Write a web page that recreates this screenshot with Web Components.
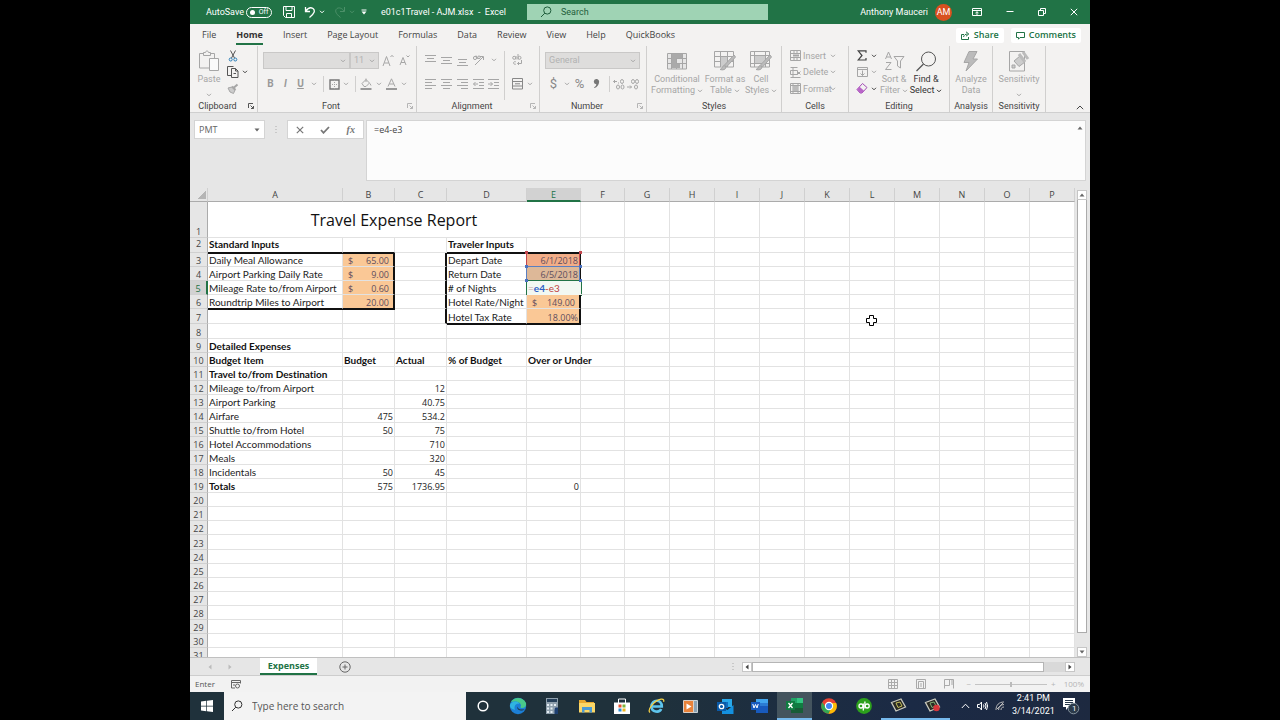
<!DOCTYPE html>
<html lang="en">
<head>
<meta charset="utf-8">
<title>e01c1Travel - AJM.xlsx - Excel</title>
<style>
  html, body { margin: 0; height: 100%; background: #000; }
  body { font: 9px/12px "Open Sans", "Noto Sans", sans-serif; color: #444; }
</style>
</head>
<body>
<excel-app></excel-app>
<script>
const svg = (w, h, body) => `<svg xmlns="http://www.w3.org/2000/svg" width="${w}" height="${h}" viewBox="0 0 ${w} ${h}" fill="none" stroke="currentColor" aria-hidden="true">${body}</svg>`;

const ICONS = {
  save: svg(12, 12, '<path d="M.5.5h11v11h-9l-2-2zM3 .5v4h6v-4M3.500 11.500v-4h5v4"/>'),
  undo: svg(12, 12, '<path stroke-width="1.300" d="M1.500 1v4.500H6M1.800 5.200C4 2 7 1.200 9 2.500c2.500 2 1.500 5-3.500 9"/>'),
  redo: svg(12, 12, '<path d="M10.500 1v4.500H6M10.200 5.200C8 2 5 1.200 3 2.500c-2.500 2-1.500 5 3.500 9"/>'),
  chev: svg(6, 4, '<path d="M1 .8l2 2 2-2"/>'),
  caret: svg(6, 4, '<path fill="currentColor" stroke="none" d="M.500.500h5L3 3.500z"/>'),
  customize: svg(6, 6, '<path d="M.500 1h5"/><path fill="currentColor" stroke="none" d="M.500 2.500h5L3 5.500z"/>'),
  magnify: svg(12, 12, '<circle cx="7.300" cy="4.500" r="3.600"/><path d="M4.800 7.200L1 11"/>'),
  ribbonopts: svg(10, 8, '<path d="M.500.500h9v7h-9zM.500 2.500h9M5 7V4M3.500 5L5 3.700 6.500 5"/>'),
  min: svg(8, 8, '<path d="M.500 3.500h7"/>'),
  restore: svg(8, 8, '<path d="M.500 2.500h5v5h-5zM2.500 2V.500h5v5H6"/>'),
  close: svg(8, 8, '<path d="M.800.800l6.400 6.400M7.200.800L.800 7.200"/>'),
  share: svg(9, 9, '<path d="M3 3.500H.500v5h7V6M2.500 6c.5-2 2-3 4-3M5 .800L7.800 3 5 5.200"/>'),
  comment: svg(9, 9, '<path d="M.500 1.500h8v5H4L2.500 8.200V6.500h-2z"/>'),
  paste: svg(22, 22, '<path d="M11 18H1.500V3.500H6M12 3.500h4.500V8"/><path d="M5.500 5.500v-3h2c0-2 3-2 3 0h2v3z"/><path fill="#fafafa" d="M11.500 8.500h9v12h-9z"/>'),
  cut: svg(10, 12, '<path stroke="#555" d="M2.500.500l4 7.500M7.500.500l-4 7.500"/><circle cx="2.700" cy="9.500" r="1.500" stroke="#2b7fb8"/><circle cx="7.300" cy="9.500" r="1.500" stroke="#2b7fb8"/>'),
  copy: svg(12, 12, '<path stroke="#555" d="M4 9.500H.500v-9h6M4.500 2.500h4l2.500 2.500v6.500H4.500zM8.500 2.500V5H11M6.500 7.500h2.500"/>'),
  painter: svg(12, 11, '<path fill="#ccc" d="M1 5l4-1 3 3-1.500 3.500L3 9z"/><path stroke-width="2" d="M7 4.500l3.500-3M5 3.500l3.500 3.500"/>'),
  grow: svg(12, 13, '<path d="M1 12L4.500 2.500 8 12M2.300 9h4.500M8.500 3L10 1.300 11.500 3"/>'),
  shrink: svg(11, 12, '<path d="M1 11l3-7.500L7 11M2 8.500h4M7.500 1.500L9 3l1.500-1.500"/>'),
  borders: svg(11, 11, '<path stroke="#777" stroke-width="1.400" d="M1 1h9v9H1z"/><path stroke-dasharray="1 1" d="M5.500 1v9M1 5.500h9"/>'),
  fill: svg(12, 12, '<path d="M2 5.500L6 1.500l3.500 3.500L6 8.500H4zM6 .500V4M10 5.500l1 2"/><path stroke="#999" stroke-width="2" d="M.500 11h11"/>'),
  fontcolor: svg(11, 12, '<path d="M2 8.500L5.500.800 9 8.500M3.300 6h4.500"/><path stroke="#999" stroke-width="2" d="M0 11h11"/>'),
  launcher: svg(6, 6, '<path d="M.500 5V.500H5M2.500 2.500l3 3M5.500 3v2.500H3"/>'),
  top: svg(11, 12, '<path d="M0 1.500h11M2 4.500h7M0 7.500h11"/>'),
  middle: svg(11, 12, '<path d="M0 3.500h11M2 6.500h7M0 9.500h11"/>'),
  bottom: svg(11, 12, '<path d="M1 5.500h9M2 8.500h7M0 11.500h11"/>'),
  left: svg(11, 12, '<path d="M0 1.500h11M0 4.500h7M0 7.500h11M0 10.500h7"/>'),
  center: svg(11, 12, '<path d="M0 1.500h11M2 4.500h7M0 7.500h11M2 10.500h7"/>'),
  right: svg(11, 12, '<path d="M0 1.500h11M4 4.500h7M0 7.500h11M4 10.500h7"/>'),
  outdent: svg(11, 12, '<path d="M0 1.500h11M6 4.500h5M6 7.500h5M0 10.500h11M5 6H.500M2.500 4L.500 6l2 2"/>'),
  indent: svg(11, 12, '<path d="M0 1.500h11M6 4.500h5M6 7.500h5M0 10.500h11M0 6h4.500M2.500 4l2 2-2 2"/>'),
  orient: svg(13, 12, '<path d="M3 11l8-8M8 2.500h3.500V6"/><circle cx="3" cy="4" r="1.600"/><path d="M4 1.500l2 3.500"/><circle cx="7" cy="3.300" r="1.300"/>'),
  wrap: svg(10, 12, '<circle cx="2.200" cy="3.800" r="1.500"/><path d="M4 2v3.500M6 0v5.500"/><circle cx="7.500" cy="3.800" r="1.500"/><path d="M3.800 7.800c-3-1-3 3.200 0 2.400M9.500 6v3.500H5.500M7 8L5.500 9.500 7 11"/>'),
  merge: svg(11, 12, '<path stroke="#888" d="M.500.500h10v10.500H.500zM.500 3.500h10M.500 8h10M3 5.800h5"/>'),
  comma: svg(7, 10, '<path fill="#777" stroke="none" d="M3.500 0a2.600 2.600 0 0 1 2.600 3C6 6 4 8.300 1.500 9L1 8.200c1.500-.7 2.200-1.700 2.300-3A2.600 2.600 0 0 1 3.500 0z"/>'),
  decinc: svg(12, 11, '<path d="M4 2.500H.500M2 1L.500 2.500 2 4M5.500 3.500v1"/><ellipse cx="9" cy="2.500" rx="1.500" ry="2"/><ellipse cx="5" cy="8" rx="1.500" ry="2"/><ellipse cx="9.500" cy="8" rx="1.500" ry="2"/>'),
  decdec: svg(12, 11, '<ellipse cx="6" cy="2.500" rx="1.500" ry="2"/><ellipse cx="10" cy="2.500" rx="1.500" ry="2"/><path d="M0 8h4.500M3 6.500L4.500 8 3 9.500"/><ellipse cx="9" cy="8" rx="1.500" ry="2"/>'),
  condfmt: svg(20, 17, '<path fill="#e6e6e6" d="M.500.500h19v15.500H.500zM.500 5.500h19M.500 10.500h19M4.500.500V16M9.500.500V16M15.500.500V16"/><path fill="#aaa" stroke="none" d="M5 1h4v14H5zM9 1h6v4H9zM9 11h4v4H9z"/>'),
  fmttable: svg(22, 20, '<path d="M.500.500h19v15.500H.500zM.500 5.500h19M.500 10.500h19M6.500.500V16M13.500.500V16"/><path fill="#ccc" stroke="none" d="M7 6h6v9H7z"/><path fill="#bbb" d="M20 4L10.500 14l2 2L21.500 6zM10 14.500c-2 .5-1 3-4 4 3 1 6 0 6-2.500z"/>'),
  cellstyle: svg(22, 20, '<path d="M.500.500h19v15.500H.500zM.500 4.500h19M.500 12.500h19M4.500.500V16M15.500.500V16"/><path fill="#ccc" stroke="none" d="M5 5h10v7H5z"/><path fill="#bbb" d="M20 4L10.500 14l2 2L21.500 6zM10 14.500c-2 .5-1 3-4 4 3 1 6 0 6-2.500z"/>'),
  cinsert: svg(11, 11, '<path d="M.500.500h10v10H.500zM.500 3.500h10M.500 7.500h10M4 .500v3M7 .500v3M4 7.500v3M7 7.500v3"/><path stroke-width="2" d="M3 5.500h6"/>'),
  cdelete: svg(11, 11, '<path d="M.500.500h7M.500 3.500h7v4H.500zM.500 10.500h10M3 .500v10M7.500 4.500l3 3M10.500 4.500l-3 3"/>'),
  cformat: svg(11, 11, '<path d="M.500.500h10v10H.500zM.500 8.500h10M.500 2.500h10M3 0v11M8 0v11"/><path fill="#bbb" stroke="none" d="M3 3h5v5H3z"/>'),
  sum: svg(10, 11, '<path stroke="#444" stroke-width="1.200" d="M9 2.800V.800H1.200L5 5.500 1.200 10H9V8"/>'),
  filldown: svg(11, 10, '<path d="M.500.500h10v9H.500zM.500 2.500h10M5.500 3.500v5M3.500 6.500l2 2 2-2"/>'),
  eraser: svg(12, 11, '<path stroke="#a34bb5" d="M1 6.500l5.500-6L11 4.500l-5 5.500H4z"/><path fill="#b865c8" stroke="none" d="M1 6.500l2.500-2.700L8 7.800 6 10H4z"/>'),
  sort: svg(21, 20, '<path d="M1.500 8L4.500 1l3 7M2.500 6h4M2 11.500h5L1.500 18.500H7.500"/><path d="M10 5.500h10L16.500 10v7l-3-2v-5z"/>'),
  find: svg(22, 21, '<circle cx="13.500" cy="8" r="7" stroke="#555"/><path stroke="#555" stroke-width="1.300" d="M8.500 13L1.500 20"/>'),
  bolt: svg(16, 21, '<path fill="#bbb" d="M6 .500h8L10 8h4.500L3 20l3-8.500H1z"/>'),
  sens: svg(21, 21, '<path d="M.500.500h15v19.500H.500z"/><path fill="#ccc" d="M5 10l6-5 5 6-6 4.500zM3 14h3v3H3z"/><path stroke-width="3" stroke="#bbb" d="M10 3l6 8M14 1l5 7"/>'),
  colup: svg(8, 5, '<path stroke="#444" d="M.800 4.200L4 1l3.200 3.200"/>'),
  cancel: svg(8, 8, '<path stroke-width="1.200" d="M.800.800l6.400 6.400M7.200.800L.800 7.200"/>'),
  check: svg(10, 8, '<path stroke-width="1.800" d="M1 4l2.500 2.800L9 1"/>'),
  dots: svg(2, 10, '<path stroke="#aaa" stroke-dasharray="1 2" d="M1 1v9"/>'),
  up: svg(6, 4, '<path fill="#666" stroke="none" d="M3 .500L5.500 3.500h-5z"/>'),
  down: svg(6, 4, '<path fill="#666" stroke="none" d="M3 3.500L5.500.500h-5z"/>'),
  prev: svg(4, 6, '<path fill="currentColor" stroke="none" d="M.500 3L3.500.500v5z"/>'),
  next: svg(4, 6, '<path fill="currentColor" stroke="none" d="M3.500 3L.500.500v5z"/>'),
  plus: svg(12, 12, '<circle cx="6" cy="6" r="5.200"/><path d="M3.500 6h5M6 3.500v5"/>'),
  macro: svg(10, 9, '<path stroke="#666" d="M.500.500h9v3M.500.500V8H4M.500 2.500h9M2 5h2"/><circle cx="6.500" cy="6" r="2" stroke="#666"/>'),
  vnormal: svg(10, 10, '<path d="M.500.500h9v9h-9zM.500 3.500h9M.500 6.500h9M3.500.500v9M6.500.500v9"/>'),
  vpage: svg(10, 10, '<path d="M.500.500h9v9h-9zM2.500 2.500h5v7M2.500 2.500v7M4 5h2M4 7h2"/>'),
  vbreak: svg(10, 10, '<path d="M.500 9.500v-9h9v9M.500 6.500h5v-6M8 1v5"/>'),
  win: svg(12, 12, '<path fill="#fff" stroke="none" d="M0 1.600l5.300-.800v4.900H0zM6 .700L12 0v5.700H6zM0 6.400h5.300v4.900L0 10.500zM6 6.400h6V12l-6-.800z"/>'),
  cortana: svg(12, 12, '<circle cx="6" cy="6" r="4.800" stroke="#fff" stroke-width="1.500"/>'),
  edge: svg(18, 18, '<circle cx="9" cy="9" r="8.200" fill="#1c7fd6" stroke="none"/><path fill="#49c98a" stroke="none" d="M2 5C5-.5 14-.5 17 6c.7 3-1 5-4 5-1.500 0-2-1-1-2C12 5 7 3.500 2 5z"/><path fill="#2fb4e0" stroke="none" d="M1 8c1-4 8-5 9.500-1C7 6 4.500 9 6 13 3 12 .8 11 1 8z"/><path fill="#1f313d" stroke="none" d="M9.300 8.500c-1.500 2.500.5 5 6.500 3.800-2 1.700-7.300 2-7.500-1.500z"/>'),
  calc: svg(12, 16, '<path fill="#8fa0ad" stroke="none" d="M0 0h12v16H0z"/><path fill="#26405a" stroke="none" d="M1 1h10v3H1z"/><path stroke="#e4edf3" stroke-width="2" stroke-dasharray="2 1.500" d="M1 7h10M1 10.500h10M1 14h7"/><path fill="#1d3f70" stroke="none" d="M8.500 9.500h3.500V16H8.500z"/>'),
  folder: svg(16, 14, '<path fill="#e9a92f" stroke="none" d="M0 1h6l1.500 2H15v10H0z"/><path fill="#fbd767" stroke="none" d="M0 4h16v9.500H0z"/><path fill="#4b9ad4" stroke="none" d="M3 8h10v5.500h-2.500V11h-5v2.500H3z"/>'),
  store: svg(16, 16, '<path stroke="#fff" d="M4.500 5V1h7v4"/><path fill="#fff" stroke="none" d="M0 4.500h16V16H0z"/><path fill="#e8502c" stroke="none" d="M4.500 6.500h3v3h-3z"/><path fill="#7db63c" stroke="none" d="M8.500 6.500h3v3h-3z"/><path fill="#2c8fd6" stroke="none" d="M4.500 10.500h3v3h-3z"/><path fill="#f0b51d" stroke="none" d="M8.500 10.500h3v3h-3z"/>'),
  ie: svg(17, 16, '<path stroke="#5ec5ee" stroke-width="2.600" d="M3.500 8.500h10.300C14 .5 3.500 1 3.500 8.500c0 6 8 6.500 9.700 2.500"/><path stroke="#f3cf45" stroke-width="1.300" d="M2 14.500C-1 12 6 2.500 13 1.200c3-.4 3 1.300 2.500 2.600"/>'),
  media: svg(15, 13, '<path fill="#8aa2b3" stroke="#c8d3da" d="M3 .500h11.500v12H3z"/><path fill="#e8823a" stroke="#d9cfc6" d="M.500.500h10v12H.500z"/><path fill="#fff" stroke="none" d="M3.500 3.500l5 3-5 3z"/>'),
  outlook: svg(17, 16, '<path fill="#28a8ea" stroke="none" d="M5 1h10v8H5z"/><path fill="#0f6cbd" stroke="none" d="M5 4h6v6H5z"/><path fill="#1490df" stroke="none" d="M5 9l5.500 3L16.500 7v9H5z"/><path fill="#0a5aa8" stroke="none" d="M0 4h9v9H0z"/><circle cx="4.500" cy="8.500" r="2.200" stroke="#fff" stroke-width="1.300"/>'),
  word: svg(17, 14, '<path fill="#41a5ee" stroke="none" d="M5 0h12v4H5z"/><path fill="#2b7cd3" stroke="none" d="M5 4h12v3H5z"/><path fill="#185abd" stroke="none" d="M5 7h12v7H5zM0 3h9v8H0z"/><path stroke="#fff" d="M1.800 5l1.200 4 1.500-3.500L6 9l1.200-4"/>'),
  excel: svg(17, 15, '<path fill="#21a366" stroke="none" d="M5 0h12v5H5z"/><path fill="#107c41" stroke="none" d="M5 5h12v5H5z"/><path fill="#33c481" stroke="none" d="M11 0h6v5h-6z"/><path fill="#185c37" stroke="none" d="M5 10h12v5H5z"/><path fill="#107c41" stroke="none" d="M0 3h9v9H0z"/><path stroke="#fff" stroke-width="1.300" d="M2.500 5l4 5M6.500 5l-4 5"/>'),
  chrome: svg(16, 16, '<circle cx="8" cy="8" r="7.800" fill="#e94335" stroke="none"/><path fill="#34a853" stroke="none" d="M1.200 4.200A7.800 7.800 0 0 0 7.500 15.800L10.500 10 8 8 4.500 9z"/><path fill="#fbbc05" stroke="none" d="M15.200 5A7.800 7.800 0 0 1 7.500 15.800L11 9V5z"/><circle cx="8" cy="8" r="3.600" fill="#4285f4" stroke="#fff" stroke-width="1.200"/>'),
  qb: svg(16, 16, '<circle cx="8" cy="8" r="7.900" fill="#2ca01c" stroke="none"/><g stroke="#fff" stroke-width="1.300"><circle cx="5" cy="8" r="2"/><path d="M7.300 5.500v7M8.900 3.500v7"/><circle cx="11.200" cy="8" r="2"/></g>'),
  cam: svg(17, 14, '<path fill="#2a2a24" stroke="#c9c9bd" stroke-width="1.300" d="M1.500 4.500L11 1l4.500 8L6 13z"/><path fill="none" stroke="#c6c05a" d="M6 5l4-1 2 4-4 1.500z"/>'),
  rec: svg(17, 14, '<path fill="#2a2a24" stroke="#c9c9bd" stroke-width="1.300" d="M1.500 4.500L11 1l4.500 8L6 13z"/><path fill="none" stroke="#7fae74" d="M6 5l4-1 2 4-4 1.500z"/><circle cx="12.500" cy="10" r="3.200" fill="#d8363b" stroke="none"/>'),
  tray: svg(9, 6, '<path stroke="#fff" d="M.800 5L4.500 1.200 8.200 5"/>'),
  sound: svg(11, 10, '<path stroke="#fff" d="M.500 3.500h2L4.500 1v8L2.500 6.500h-2zM6.500 3.500q1 1.500 0 3M8 2q2 3 0 6M9.500 1q2.200 4 0 8"/>'),
  wifi: svg(10, 10, '<path stroke="#bbb" d="M1 9C1 4 4 1 9 1M3.500 9C3.500 6 6 3.500 9 3.500M6 9c0-2 1-3 3-3M2 8l6-6"/>'),
  note: svg(18, 17, '<path fill="#fff" stroke="none" d="M1 0h12v9H6.500L4 12V9H1z"/><path stroke="#26374a" d="M3 2.500h8M3 4.500h8M3 6.500h5"/><circle cx="11.500" cy="10.500" r="5.300" fill="#2b3a4a" stroke="#8794a0"/>'),
  cross: svg(13, 13, '<path fill="#fff" stroke="#000" d="M4.500 1.500h4v3h3v4h-3v3h-4v-3h-3v-4h3z"/>')
};

class Base extends HTMLElement {
  constructor() {
    super();
    this.attachShadow({ mode: "open" });
  }
  connectedCallback() {
    this.shadowRoot.innerHTML = `<style>*,*::before{box-sizing:border-box}button,input,select,textarea{font:inherit;color:inherit;margin:0;padding:0;border:0;border-radius:0;background:none}button{display:flex;align-items:center;justify-content:center;white-space:nowrap}a{color:inherit;text-decoration:none}${this.css || ""}</style>${this.html}`;
  }
}

customElements.define("ui-icon", class extends Base {
  css = ":host{display:inline-flex;flex:none}svg{display:block}";
  get html() { return ICONS[this.getAttribute("name")]; }
});
const ic = n => `<ui-icon name="${n}"></ui-icon>`;
const btn = (n, label, cls = "") => `<button class="${cls}" aria-label="${label}">${ic(n)}</button>`;

customElements.define("title-bar", class extends Base {
  css = `:host{display:grid;grid-template-columns:337px minmax(0,241px) 1fr;height:24px;background:#217346;color:#fff;font-family:Roboto,sans-serif}
    .l,.r{display:flex;align-items:center}
    .l{padding-left:16px}
    .l>span:first-child{width:35px;white-space:nowrap}
    .switch{width:26px;height:11px;border:1px solid #fff;border-radius:6px;font-size:7px;line-height:9px;gap:4px;margin:0 11px 0 5px}
    .switch::before{content:"";width:5px;height:5px;border-radius:50%;background:#fff}
    .g9{margin-left:9px}.g3{margin-left:3px}.dim{color:#4c9069}.g6{margin-left:6px}
    .name{margin:0 21px 0 auto}
    label{display:flex;align-items:center;gap:9px;margin:4px 0;padding-left:13px;background:#9fd3b4;color:#1f5d3b}
    input{flex:1;min-width:0;height:16px}input::placeholder{color:#1f5d3b;opacity:1}
    .r{justify-content:flex-end;padding-right:12px;gap:24px}
    .user{display:flex;align-items:center;gap:7px;margin-right:-4px}
    .av{width:17px;height:17px;border-radius:50%;background:#d8501f;line-height:17px;text-align:center}`;
  html = `<div class="l"><span>AutoSave</span><button class="switch" role="switch" aria-checked="false">Off</button>
    ${btn("save", "Save")}${btn("undo", "Undo", "g9")}${btn("chev", "Undo list", "g3")}${btn("redo", "Redo", "dim g9")}${btn("chev", "Redo list", "dim g3")}${btn("customize", "Customize toolbar", "g6")}
    <span class="name">e01c1Travel - AJM.xlsx&nbsp; -&nbsp; Excel</span></div>
    <label>${ic("magnify")}<input type="search" placeholder="Search" aria-label="Search"></label>
    <div class="r"><span class="user">Anthony Mauceri <span class="av">AM</span></span>${btn("ribbonopts", "Ribbon display options")}${btn("min", "Minimize")}${btn("restore", "Restore")}${btn("close", "Close")}</div>`;
});

customElements.define("ribbon-tabs", class extends Base {
  css = `:host{display:flex;align-items:center;height:22px;background:#f3f2f1;padding:0 9px 0 12px}
    nav{display:flex;gap:20px;flex:1}
    a{line-height:16px;border-bottom:2px solid transparent;padding-top:2px;white-space:nowrap}
    .on{font-weight:700;border-color:#217346;color:#333}
    button{height:15px;background:#fff;color:#217346;font-weight:600;gap:4px;padding:0 5px;margin-left:7px;border-radius:2px}`;
  html = `<nav>${["File", "Home", "Insert", "Page Layout", "Formulas", "Data", "Review", "View", "Help", "QuickBooks"].map(t => `<a href="#"${t === "Home" ? ' class="on" aria-current="page"' : ""}>${t}</a>`).join("")}</nav>
    <button>${ic("share")}Share</button><button>${ic("comment")}Comments</button>`;
});

customElements.define("ribbon-group", class extends Base {
  css = `:host{display:flex;flex-direction:column;height:66px;border-right:1px solid #d0cfce;color:#a6a6a6}
    .body{flex:1;display:flex;min-height:0}
    footer{display:flex;align-items:center;height:12px;line-height:11px;text-align:center;white-space:nowrap;color:#444}
    span{flex:1}button{width:12px}`;
  get html() {
    const l = this.getAttribute("launcher");
    return `<div class="body"><slot></slot></div><footer><span>${this.getAttribute("label")}</span>${l ? `<button aria-label="${this.getAttribute("label")} settings" style="color:${l}">${ic("launcher")}</button>` : ""}</footer>`;
  }
});

customElements.define("big-button", class extends Base {
  css = `:host{display:block}
    button{display:grid;grid-template-rows:22px auto;justify-items:center;align-content:start;width:100%;padding-top:4px;line-height:11px;text-align:center}
    button>span{margin-top:2px}.c{display:inline-flex;margin-left:2px;vertical-align:middle}.solo{margin-top:4px}`;
  get html() {
    const solo = this.hasAttribute("solo"), arrow = this.hasAttribute("arrow");
    const lines = this.getAttribute("text").split("|").join("<br>");
    return `<button>${ic(this.getAttribute("icon"))}<span>${lines}${arrow ? `<span class="c">${ic("chev")}</span>` : ""}</span>${solo ? `<span class="solo">${ic("chev")}</span>` : ""}</button>`;
  }
});

customElements.define("combo-box", class extends Base {
  css = `:host{display:block;position:relative;height:17px}
    select{appearance:none;width:100%;height:17px;background:#dedddc;border:1px solid #c9c8c7;padding:0 3px;color:#b2b2b2;opacity:1}
    ui-icon{position:absolute;right:4px;top:7px}`;
  get html() {
    const v = this.getAttribute("value") || "";
    return `<select disabled aria-label="${this.getAttribute("label")}"><option>${v}</option></select>${ic("chev")}`;
  }
});

customElements.define("excel-ribbon", class extends Base {
  css = `:host{display:flex;background:#f3f2f1;border-bottom:1px solid #cfcfcf;font-family:Roboto,sans-serif}
    .row{display:grid;align-items:center;justify-items:center;height:20px}
    .stack{display:grid;grid-template-rows:17px 16px 17px;align-items:center;padding-top:1px}
    .cb{width:68px}.fo{width:159px}.al{width:123px}.nu{width:107px}.st{width:135px}.ce{width:67px}.ed{width:101px}.an{width:43px}.se{width:53px}
    .clip{grid-template-columns:14px 10px}.clip>*{justify-self:center}
    .two{display:grid;grid-template-rows:20px 20px;row-gap:4px;padding:4px 0 0 5px;align-content:start}
    .f1{grid-template-columns:87px 29px 17px 17px}.f1 combo-box{width:100%}
    .f2{grid-template-columns:15px 15px 15px 11px 8px 14px 10px 9px 12px 13px 13px 11px}
    .a1{grid-template-columns:16px 16px 16px 17px 13px}
    .a3{grid-template-columns:14px 12px}
    .n2{grid-template-columns:17px 9px 17px 17px 8px 12px 16px}
    .n2 .cur{font-size:13px;color:#888}
    .f2 .t{font-size:10px;color:#999;font-weight:700}
    i.s{width:1px;height:16px;background:#d0cfce}
    .alsep{width:1px;margin:5px 0 0 4px;background:#d0cfce}
    .cells{width:100%;padding-left:8px;justify-items:start}.cells button{display:grid;grid-template-columns:13px 27px 8px;justify-items:start;text-align:left}
    .dk{color:#444}.black{color:#333}
    .end{flex:1;display:flex;align-items:flex-end;justify-content:flex-end;padding:0 6px 2px}
    .n1{width:95px;align-content:center;display:grid}`;
  html = `<ribbon-group class="cb" label="Clipboard" launcher="#555"><big-button icon="paste" text="Paste" solo style="width:36px;padding-left:2px"></big-button>
      <div class="stack clip">${btn("cut", "Cut")}<i></i>${btn("copy", "Copy")}${btn("chev", "Copy options", "dk")}${btn("painter", "Format painter")}</div></ribbon-group>
    <ribbon-group class="fo" label="Font" launcher="#b5b5b5"><div class="two"><div class="row f1"><combo-box label="Font name"></combo-box><combo-box label="Font size" value="11"></combo-box>${btn("grow", "Grow font")}${btn("shrink", "Shrink font")}</div>
      <div class="row f2"><button class="t">B</button><button class="t"><em>I</em></button><button class="t"><u>U</u></button>${btn("chev", "Underline styles")}<i class="s"></i>${btn("borders", "Borders")}${btn("chev", "Border styles")}<i class="s"></i>${btn("fill", "Fill color")}${btn("chev", "Fill colors")}${btn("fontcolor", "Font color")}${btn("chev", "Font colors")}</div></div></ribbon-group>
    <ribbon-group class="al" label="Alignment" launcher="#b5b5b5"><div class="two"><div class="row a1">${btn("top", "Top align")}${btn("middle", "Middle align")}${btn("bottom", "Bottom align")}${btn("orient", "Orientation")}${btn("chev", "Orientation options")}</div>
      <div class="row a1">${btn("left", "Align left")}${btn("center", "Center")}${btn("right", "Align right")}${btn("outdent", "Decrease indent")}${btn("indent", "Increase indent")}</div></div><i class="alsep"></i>
      <div class="two"><div class="row a3">${btn("wrap", "Wrap text")}</div><div class="row a3">${btn("merge", "Merge and center")}${btn("chev", "Merge options")}</div></div></ribbon-group>
    <ribbon-group class="nu" label="Number" launcher="#b5b5b5"><div class="two"><div class="row n1"><combo-box label="Number format" value="General" style="width:95px"></combo-box></div>
      <div class="row n2"><button class="cur">$</button>${btn("chev", "Currencies")}<button class="cur">%</button>${btn("comma", "Comma style")}<i class="s"></i>${btn("decinc", "Increase decimal")}${btn("decdec", "Decrease decimal")}</div></div></ribbon-group>
    <ribbon-group class="st" label="Styles"><big-button icon="condfmt" text="Conditional|Formatting" arrow style="width:60px"></big-button><big-button icon="fmttable" text="Format as|Table" arrow style="width:36px"></big-button><big-button icon="cellstyle" text="Cell|Styles" arrow style="width:36px"></big-button></ribbon-group>
    <ribbon-group class="ce" label="Cells"><div class="stack cells"><button>${ic("cinsert")}Insert${ic("chev")}</button><button>${ic("cdelete")}Delete${ic("chev")}</button><button>${ic("cformat")}Format${ic("chev")}</button></div></ribbon-group>
    <ribbon-group class="ed" label="Editing"><div class="stack clip" style="padding-left:6px">${btn("sum", "AutoSum")}${btn("chev", "AutoSum options", "dk")}${btn("filldown", "Fill")}${btn("chev", "Fill options")}${btn("eraser", "Clear")}${btn("chev", "Clear options", "dk")}</div>
      <big-button icon="sort" text="Sort &amp;|Filter" arrow style="width:30px"></big-button><big-button class="black" icon="find" text="Find &amp;|Select" arrow style="width:34px"></big-button></ribbon-group>
    <ribbon-group class="an" label="Analysis"><big-button icon="bolt" text="Analyze|Data" style="width:42px"></big-button></ribbon-group>
    <ribbon-group class="se" label="Sensitivity"><big-button icon="sens" text="Sensitivity" solo style="width:52px"></big-button></ribbon-group>
    <div class="end">${btn("colup", "Collapse the ribbon")}</div>`;
});

customElements.define("formula-bar", class extends Base {
  css = `:host{display:flex;align-items:flex-start;height:75px;padding:7px 4px 0;background:#e6e6e6}
    .box{display:flex;align-items:center;height:19px;background:#fff;border:1px solid #d4d4d4}
    .name{width:71px;padding:0 4px;color:#666}.name input{flex:1;min-width:0}
    .d{margin:5px 10px 0}
    .acts{width:77px;justify-content:space-around;color:#777}
    em{font:italic 700 10px "Liberation Serif",serif}
    .f{flex:1;display:flex;align-items:flex-start;height:61px;margin-left:2px;background:#fcfcfc;border:1px solid #d4d4d4;padding:3px 2px 0 7px}
    .f button{margin-top:2px}
    textarea{flex:1;height:50px;resize:none;outline:0;line-height:12px}`;
  html = `<div class="box name"><input value="PMT" aria-label="Name box">${ic("caret")}</div><ui-icon class="d" name="dots"></ui-icon>
    <div class="box acts">${btn("cancel", "Cancel")}${btn("check", "Enter")}<button aria-label="Insert function"><em>fx</em></button></div>
    <div class="f"><textarea aria-label="Formula bar">=e4-e3</textarea>${btn("up", "Collapse formula bar")}</div>`;
});

const COLS = { A: 135, B: 52, C: 52, D: 80, E: 54 };
"FGHIJKLMNOP".split("").forEach(c => COLS[c] = 45);
COLS.F = 44;
const HEIGHTS = { 1: 36, 2: 15, 7: 15, 8: 15, 23: 15 };
const money = v => `<span class="m"><span>$</span><span>${v}</span></span>`;
const CELLS = {
  A2: ["Standard Inputs", "b kb"], B2: ["", "kb"], D2: ["Traveler Inputs", "b kb"], E2: ["", "kb"],
  A3: ["Daily Meal Allowance"], B3: [money("65.00"), "in kr"], C3: ["", "kr"], D3: ["Depart Date"], E3: ["6/1/2018", "in r kr ref1"],
  A4: ["Airport Parking Daily Rate"], B4: [money("9.00"), "in kr"], C4: ["", "kr"], D4: ["Return Date"], E4: ["6/5/2018", "in r kr ref2"],
  A5: ["Mileage Rate to/from Airport"], B5: [money("0.60"), "in kr"], C5: ["", "kr"], D5: ["# of Nights"], E5: ['<i>=</i><i class="c1">e4</i>-<i class="c2">e3</i>', "edit"],
  A6: ["Roundtrip Miles to Airport", "kb"], B6: ["20.00", "in r kr kb p"], C6: ["", "kr"], D6: ["Hotel Rate/Night"], E6: [money("149.00"), "in kr"],
  C7: ["", "kr"], D7: ["Hotel Tax Rate", "kb"], E7: ["18.00%", "in r kr kb"],
  A9: ["Detailed Expenses", "b"],
  A10: ["Budget Item", "b"], B10: ["Budget", "b"], C10: ["Actual", "b"], D10: ["% of Budget", "b"], E10: ["Over or Under", "b"],
  A11: ["Travel to/from Destination", "b"],
  A12: ["Mileage to/from Airport"], C12: ["12", "r"],
  A13: ["Airport Parking"], C13: ["40.75", "r"],
  A14: ["Airfare"], B14: ["475", "r"], C14: ["534.2", "r"],
  A15: ["Shuttle to/from Hotel"], B15: ["50", "r"], C15: ["75", "r"],
  A16: ["Hotel Accommodations"], C16: ["710", "r"],
  A17: ["Meals"], C17: ["320", "r"],
  A18: ["Incidentals"], B18: ["50", "r"], C18: ["45", "r"],
  A19: ["Totals", "b"], B19: ["575", "r"], C19: ["1736.95", "r"], E19: ["0", "r"]
};

customElements.define("sheet-grid", class extends Base {
  css = `:host{flex:1;min-height:0;display:flex;position:relative;overflow:hidden;background:#e6e6e6}
    .view{flex:1;min-width:0;overflow:hidden;background:linear-gradient(#e6e6e6 14px,#fff 14px)}
    table{table-layout:fixed;width:885px;border-spacing:0;background:#fff;font:10px/12px Lato,"Open Sans",sans-serif;font-variant-ligatures:none;color:#222}
    th{height:14px;padding:0;background:#e6e6e6;font:400 9px/12px "Open Sans",sans-serif;color:#444;border-right:1px solid #d0d0d0;border-bottom:1px solid #ababab}
    tbody th{height:auto;border-bottom-color:#d0d0d0;border-right-color:#ababab;vertical-align:bottom;line-height:11px}
    thead th.on{background:#d2d2d2;border-bottom:2px solid #217346;color:#217346;line-height:11px}
    tbody th.on{background:#d2d2d2;border-right:2px solid #217346;color:#217346}
    .all{background:linear-gradient(135deg,transparent 50%,#b5b5b5 50%) 8px 3px/8px 8px no-repeat #e6e6e6}
    td{position:relative;padding:0 1px;white-space:nowrap;vertical-align:bottom;border-right:1px solid #e2e2e2;border-bottom:1px solid #e2e2e2}
    .title{font:16px/22px "Open Sans",sans-serif;color:#111;text-align:center;vertical-align:middle}
    .b{font-weight:700;color:#111}.r,.in{font:9px/11px "Open Sans",sans-serif}.r{text-align:right}
    tr:nth-child(2) td,tr:nth-child(2) th{vertical-align:top}
    .kb{border-bottom-color:#111;box-shadow:0 1px #111;z-index:1}.kr{border-right:2px solid #111}
    .in{background:#fac896;color:#5e4e5e}
    td.p{padding-right:4px}
    .m{display:flex;justify-content:space-between;padding:0 3px 0 4px}
    .ref1{background:#f2ad87}.ref2{background:#ddb898}
    .ref1::after,.ref2::after{content:"";position:absolute;inset:-1px;border:1px solid #c2474d}
    .ref2::after{border-color:#5a7fc0}
    .edit{background:#f2f8f2;border-color:transparent;outline:1px solid #217346;color:#c33}
    .edit i{font-style:normal;color:#c9a0a0}.edit .c1{color:#2f5fc4;font-weight:700}.edit .c2{color:#c0413f}
    .h{position:absolute;width:3px;height:3px;background:#c2474d;z-index:1}
    .ref2 .h{background:#4a72c0}
    .h1{left:-2px;top:-2px}.h2{right:-3px;top:-2px}.h3{left:-2px;bottom:-2px}.h4{right:-3px;bottom:-2px}
    .vs{width:15px;display:grid;grid-template-rows:10px 1fr 24px;padding:2px 3px 0 2px}
    .vs button{height:10px;background:#fff;border:1px solid #c6c6c6}
    .thumb{background:#fff;border:1px solid #ababab;border-top:0}
    .vs button:last-child{align-self:end}
    .cur{position:absolute;left:675px;top:126px}`;
  get html() {
    const cols = Object.keys(COLS);
    const handles = [1, 2, 3, 4].map(n => `<span class="h h${n}"></span>`).join("");
    let rows = "";
    for (let r = 1; r <= 31; r++) {
      let tds = "";
      for (const c of cols) {
        if (r === 1 && "BCDE".includes(c)) continue;
        if (r === 1 && c === "A") { tds += '<td colspan="5" class="title">Travel Expense Report</td>'; continue; }
        const [t, k] = CELLS[c + r] || [""];
        tds += `<td${k ? ` class="${k}"` : ""}>${t}${k && k.includes("ref") ? handles : ""}</td>`;
      }
      rows += `<tr style="height:${HEIGHTS[r] || 14}px"><th scope="row"${r === 5 ? ' class="on"' : ""}>${r}</th>${tds}</tr>`;
    }
    return `<div class="view"><table><colgroup><col style="width:18px">${cols.map(c => `<col style="width:${COLS[c]}px">`).join("")}</colgroup>
      <thead><tr><th class="all" aria-label="Select all"></th>${cols.map(c => `<th scope="col"${c === "E" ? ' class="on"' : ""}>${c}</th>`).join("")}</tr></thead><tbody>${rows}</tbody></table></div>
      <div class="vs">${btn("up", "Scroll up")}<div class="thumb"></div>${btn("down", "Scroll down")}</div><ui-icon class="cur" name="cross"></ui-icon>`;
  }
});

customElements.define("sheet-tabs", class extends Base {
  css = `:host{display:flex;align-items:center;height:19px;padding:0 15px 0 18px;background:#e6e6e6;border-top:1px solid #c0c0c0;border-bottom:1px solid #cdcdcd}
    .nav{display:flex;gap:16px;color:#bbb}
    .tab{align-self:flex-start;width:57px;height:17px;margin:0 22px 0 28px;text-align:center;background:#fff;color:#217346;font-weight:700;line-height:16px;border-bottom:2px solid #217346}
    .add{color:#666}.d{margin:0 8px 0 auto}
    .hs{display:flex;width:333px;height:10px;background:#d9d9d9}
    .hs button{width:10px;background:#fff;border:1px solid #c6c6c6;color:#444}
    .thumb{flex:1;background:#fff;border:1px solid #b5b5b5;margin-right:21px}`;
  html = `<div class="nav">${btn("prev", "Previous sheet")}${btn("next", "Next sheet")}</div><a class="tab" href="#">Expenses</a>${btn("plus", "New sheet", "add")}
    <ui-icon class="d" name="dots"></ui-icon><div class="hs">${btn("prev", "Scroll left")}<div class="thumb"></div>${btn("next", "Scroll right")}</div>`;
});

customElements.define("status-bar", class extends Base {
  css = `:host{display:flex;align-items:center;height:16px;padding:0 6px 0 5px;background:#f2f2f2;font-size:8px;color:#555}
    .m{margin:0 auto 0 16px}.v{display:flex;gap:18px;margin-right:13px;color:#aaa}
    .z{display:flex;align-items:center;gap:4px;color:#b5b5b5}
    input{appearance:none;width:72px;height:9px;background:linear-gradient(#c4c4c4,#c4c4c4) center/100% 1px no-repeat}
    input::-webkit-slider-thumb{appearance:none;width:2px;height:5px;background:#bbb}
    output{margin-left:4px}`;
  html = `<span>Enter</span><button class="m" aria-label="Record macro">${ic("macro")}</button><div class="v">${btn("vnormal", "Normal")}${btn("vpage", "Page layout")}${btn("vbreak", "Page break preview")}</div>
    <div class="z"><button aria-label="Zoom out">−</button><input type="range" aria-label="Zoom" value="50"><button aria-label="Zoom in">+</button><output>100%</output></div>`;
});

customElements.define("task-bar", class extends Base {
  css = `:host{display:flex;height:28px;background:linear-gradient(90deg,#1f313b 50%,#1b2a45 80%,#1d2940);color:#fff;font-family:Roboto,sans-serif}
    .start{width:34px}
    label{display:flex;align-items:center;gap:9px;flex:0 1 242px;padding-left:7px;background:#f3f3f3;color:#333}
    input{flex:1;min-width:0;font-size:10px;font-family:"Open Sans",sans-serif}input::placeholder{color:#555;opacity:1}
    .apps{display:grid;grid-template-columns:repeat(14,1fr);flex:0 1 484px}
    .apps button{height:28px}
    .active{background:#44545e}.active,.open{border-bottom:2px solid #76b9ed}
    .tray{display:flex;align-items:center;flex:1;padding-left:11px;gap:7px}
    .clock{line-height:13px;text-align:center;white-space:nowrap;margin-top:-2px}
    .n{position:relative;margin:0 0 0 auto;padding-right:10px}
    .n span{position:absolute;left:10px;top:5px;font-size:8px;line-height:11px}`;
  html = `<button class="start" aria-label="Start">${ic("win")}</button><label>${ic("magnify")}<input type="search" placeholder="Type here to search" aria-label="Type here to search"></label>
    <div class="apps">${["cortana", "edge", "calc", "folder", "store", "ie", "media", "outlook", "word", "excel", "chrome", "qb", "cam", "rec"].map(n => btn(n, n, n === "excel" ? "active" : n === "cam" || n === "rec" ? "open" : "")).join("")}</div>
    <div class="tray">${btn("tray", "Hidden icons")}${btn("sound", "Volume")}${btn("wifi", "Network")}<div class="clock">2:41 PM<br>3/14/2021</div><button class="n" aria-label="Notifications">${ic("note")}<span>1</span></button></div>`;
});

customElements.define("excel-app", class extends Base {
  css = `:host{display:flex;flex-direction:column;max-width:900px;height:100vh;margin:0 auto;overflow:hidden}
    title-bar,ribbon-tabs,excel-ribbon,formula-bar,sheet-tabs,status-bar,task-bar{flex:none}`;
  html = `<title-bar></title-bar><ribbon-tabs></ribbon-tabs><excel-ribbon></excel-ribbon><formula-bar></formula-bar><sheet-grid></sheet-grid><sheet-tabs></sheet-tabs><status-bar></status-bar><task-bar></task-bar>`;
});
</script>
</body>
</html>
